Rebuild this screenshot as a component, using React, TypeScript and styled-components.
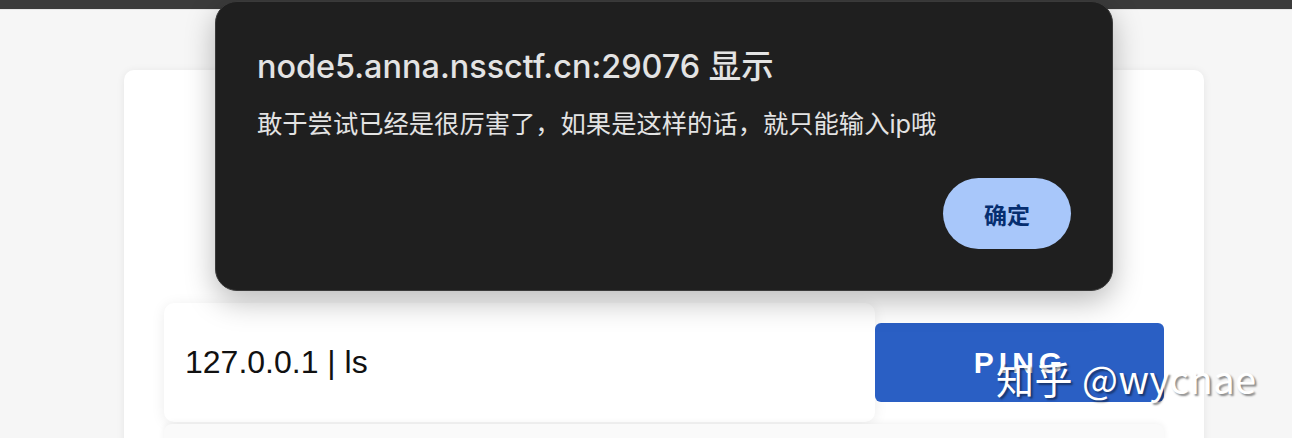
import styled, { createGlobalStyle } from "styled-components";

const Global = createGlobalStyle`
  html, body {
    margin: 0;
    padding: 0;
    background: #f6f6f6;
    overflow: hidden;
  }
  body {
    font-family: "Liberation Sans", Arial, sans-serif;
  }
`;

const Page = styled.div`
  position: relative;
  width: 1292px;
  height: 438px;
  overflow: hidden;
  background: #f6f6f6;
`;

const TopBar = styled.div`
  height: 9px;
  background: #3b3b3b;
  border-bottom: 1px solid #e6e6e6;
`;

const Main = styled.div`
  padding: 60px 0 0 124px;
`;

const Card = styled.div`
  width: 1080px;
  height: 420px;
  box-sizing: border-box;
  background: #ffffff;
  border-radius: 10px;
  box-shadow: 0 1px 8px rgba(0, 0, 0, 0.07);
  padding: 233px 40px 0 40px;
  display: flex;
  flex-direction: column;
  gap: 2px;
`;

const FormRow = styled.div`
  display: flex;
  align-items: center;
`;

const InputBox = styled.div`
  width: 711px;
  height: 119px;
  box-sizing: border-box;
  background: #ffffff;
  border-radius: 10px;
  box-shadow: 0 2px 14px rgba(0, 0, 0, 0.08);
  display: flex;
  align-items: center;
  padding-left: 21px;
  font-size: 32px;
  color: #111;
`;

const PingButton = styled.button`
  width: 289px;
  height: 79px;
  border: none;
  border-radius: 6px;
  background: #2a5fc4;
  color: #ffffff;
  font-family: "Liberation Sans", Arial, sans-serif;
  font-weight: 700;
  font-size: 30px;
  letter-spacing: 5px;
  padding: 0 0 0 2px;
`;

const Output = styled.div`
  width: 1000px;
  height: 60px;
  background: #fafafa;
  border-radius: 8px;
  box-shadow: 0 -1px 6px rgba(0, 0, 0, 0.06);
`;

const Dialog = styled.div`
  position: absolute;
  left: 215px;
  top: 1px;
  width: 898px;
  height: 290px;
  box-sizing: border-box;
  background: #1f1f1f;
  border: 1px solid #3a3a3a;
  border-radius: 22px;
  box-shadow: 0 10px 30px rgba(0, 0, 0, 0.28);
  padding: 41px 41px 41px 41px;
  display: flex;
  flex-direction: column;
  font-family: Inter, "Noto Sans CJK SC", sans-serif;
  color: #e3e3e3;
`;

const Title = styled.div`
  font-size: 32.4px;
  font-weight: 500;
  line-height: 48px;
`;

const Message = styled.div`
  margin-top: 16px;
  font-size: 25.3px;
  line-height: 34px;
`;

const Actions = styled.div`
  margin-top: auto;
  display: flex;
  justify-content: flex-end;
`;

const OkButton = styled.button`
  width: 128px;
  height: 71px;
  border: none;
  border-radius: 36px;
  background: #a8c7fa;
  color: #062e6f;
  font-family: Inter, "Noto Sans CJK SC", sans-serif;
  font-size: 23px;
  font-weight: 700;
`;

const Watermark = styled.div`
  position: absolute;
  left: 996px;
  top: 350px;
  font-family: "Noto Sans CJK SC", "Liberation Sans", sans-serif;
  font-size: 38px;
  letter-spacing: 0.5px;
  color: #ffffff;
  text-shadow: 2px 2px 2px rgba(0, 0, 0, 0.45);
  white-space: nowrap;
`;

export default function App() {
  return (
    <Page>
      <Global />
      <TopBar />
      <Main>
        <Card>
          <FormRow>
            <InputBox>127.0.0.1 | ls</InputBox>
            <PingButton>PING</PingButton>
          </FormRow>
          <Output />
        </Card>
      </Main>
      <Dialog>
        <Title>node5.anna.nssctf.cn:29076 显示</Title>
        <Message>敢于尝试已经是很厉害了，如果是这样的话，就只能输入ip哦</Message>
        <Actions>
          <OkButton>确定</OkButton>
        </Actions>
      </Dialog>
      <Watermark>知乎 @wycnae</Watermark>
    </Page>
  );
}
